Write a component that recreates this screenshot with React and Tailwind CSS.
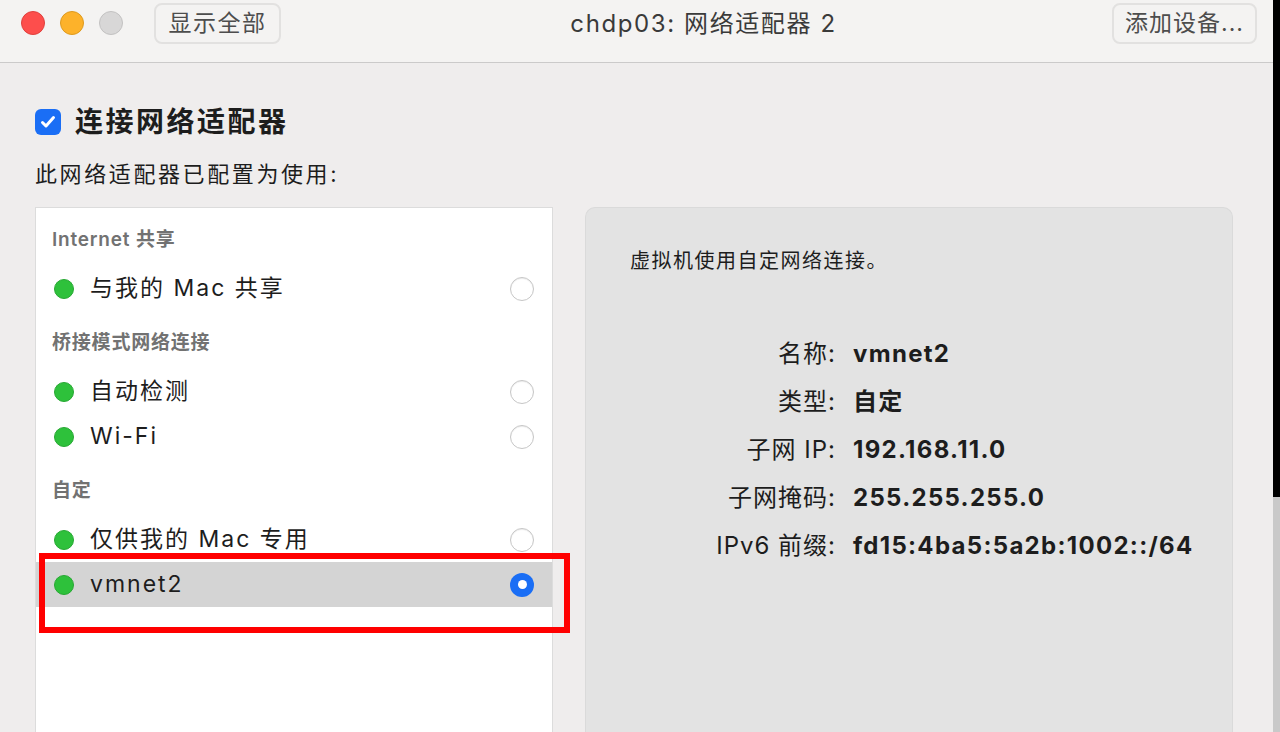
import React from 'react';

const Dot = () => <span className="w-[20px] h-[20px] rounded-full bg-[#2ec13b] border border-[#27a833] shrink-0" />;

const Radio = ({ checked }) =>
  checked ? (
    <span className="w-[24px] h-[24px] rounded-full bg-[#1a6ef5] flex items-center justify-center shrink-0">
      <span className="w-[9px] h-[9px] rounded-full bg-white" />
    </span>
  ) : (
    <span className="w-[24px] h-[24px] rounded-full bg-white border border-[#c6c6c6] shadow-[inset_0_1px_1px_rgba(0,0,0,0.08)] shrink-0" />
  );

const Header = ({ children }) => (
  <div className="h-[58px] flex items-end pb-[13px] pl-[16px] text-[19px] leading-[26px] font-semibold text-[#727272] tracking-[0.8px]">
    {children}
  </div>
);

const Row = ({ label, checked }) => (
  <div className={`h-[45px] flex items-center pl-[18px] pr-[18px] ${checked ? 'bg-[#d4d4d4]' : ''}`}>
    <Dot />
    <span className="ml-[16px] flex-1 text-[23px] text-[#1d1d1d] tracking-[2px]">{label}</span>
    <Radio checked={checked} />
  </div>
);

const infoRows = [
  ['名称:', 'vmnet2'],
  ['类型:', '自定'],
  ['子网 IP:', '192.168.11.0'],
  ['子网掩码:', '255.255.255.0'],
  ['IPv6 前缀:', 'fd15:4ba5:5a2b:1002::/64'],
];

export default function App() {
  return (
    <div className="w-[1280px] h-[732px] flex bg-black overflow-hidden font-[Inter,'Noto_Sans_CJK_SC',sans-serif]">
      <div className="w-[1273px] h-full flex flex-col bg-[#efeded]">
        {/* title bar */}
        <div className="h-[63px] shrink-0 bg-[#f4f3f2] border-b border-[#cbcaca] flex items-start pt-[3px]">
          <div className="flex items-center gap-[15px] ml-[21px] mt-[8px]">
            <span className="w-[24px] h-[24px] rounded-full bg-[#fd4e4c] border border-[#e0403d]" />
            <span className="w-[24px] h-[24px] rounded-full bg-[#fdb22a] border border-[#de9a1e]" />
            <span className="w-[24px] h-[24px] rounded-full bg-[#d8d7d7] border border-[#c3c2c2]" />
          </div>
          <button className="ml-[31px] w-[127px] h-[41px] rounded-[8px] border-2 border-[#e2e1e0] text-[23px] tracking-[1.5px] text-[#4d4d4d] flex items-center justify-center">
            显示全部
          </button>
          <div className="flex-1 h-[41px] flex items-center justify-center pl-[14px] text-[24px] text-[#3a3a3a] tracking-[1.6px]">
            chdp03: 网络适配器 2
          </div>
          <button className="mr-[16px] w-[145px] h-[41px] rounded-[8px] border-2 border-[#e2e1e0] text-[23px] tracking-[1px] text-[#4d4d4d] flex items-center justify-center">
            添加设备...
          </button>
        </div>

        {/* body */}
        <div className="flex-1 min-h-0 flex flex-col pl-[35px] pr-[40px]">
          <div className="mt-[38px] flex items-center">
            <span className="w-[26px] h-[26px] rounded-[6px] bg-[#1a6ef5] flex items-center justify-center">
              <svg width="18" height="18" viewBox="0 0 18 18">
                <path d="M3.5 9.5l3.5 3.5 7.5-8.5" fill="none" stroke="white" strokeWidth="3" strokeLinecap="round" strokeLinejoin="round" />
              </svg>
            </span>
            <span className="ml-[14px] text-[28px] font-bold text-[#1d1d1d] tracking-[2.5px]">连接网络适配器</span>
          </div>
          <div className="mt-[16px] text-[22px] leading-[30px] text-[#1d1d1d] tracking-[2.6px]">此网络适配器已配置为使用:</div>

          <div className="mt-[18px] flex-1 min-h-0 flex gap-[32px]">
            {/* list */}
            <div className="relative w-[518px] shrink-0 bg-white border border-[#dcdcdc] border-b-0">
              <Header>Internet 共享</Header>
              <Row label="与我的 Mac 共享" />
              <Header>桥接模式网络连接</Header>
              <Row label="自动检测" />
              <Row label="Wi-Fi" />
              <Header>自定</Header>
              <Row label="仅供我的 Mac 专用" />
              <Row label="vmnet2" checked />
              <div className="absolute left-[3px] top-[345px] w-[531px] h-[80px] border-[6px] border-[#ff0000]" />
            </div>

            {/* details */}
            <div className="flex-1 bg-[#e3e3e3] border border-[#dadada] border-b-0 rounded-t-[10px] pt-[39px]">
              <div className="pl-[44px] text-[20px] leading-[28px] text-[#1d1d1d] tracking-[1.5px]">虚拟机使用自定网络连接。</div>
              <div className="mt-[55px] grid grid-cols-[250px_1fr] gap-x-[17px]">
                {infoRows.map(([k, v]) => (
                  <React.Fragment key={k}>
                    <div className="h-[48px] flex items-center justify-end text-[24px] text-[#1d1d1d] tracking-[1px]">{k}</div>
                    <div className="h-[48px] flex items-center text-[24px] font-bold text-[#1d1d1d] tracking-[1.3px]">{v}</div>
                  </React.Fragment>
                ))}
              </div>
            </div>
          </div>
        </div>
      </div>
      <div className="flex-1 flex flex-col">
        <div className="h-[497px] bg-black" />
        <div className="flex-1 bg-[#c9c9c9]" />
      </div>
    </div>
  );
}
